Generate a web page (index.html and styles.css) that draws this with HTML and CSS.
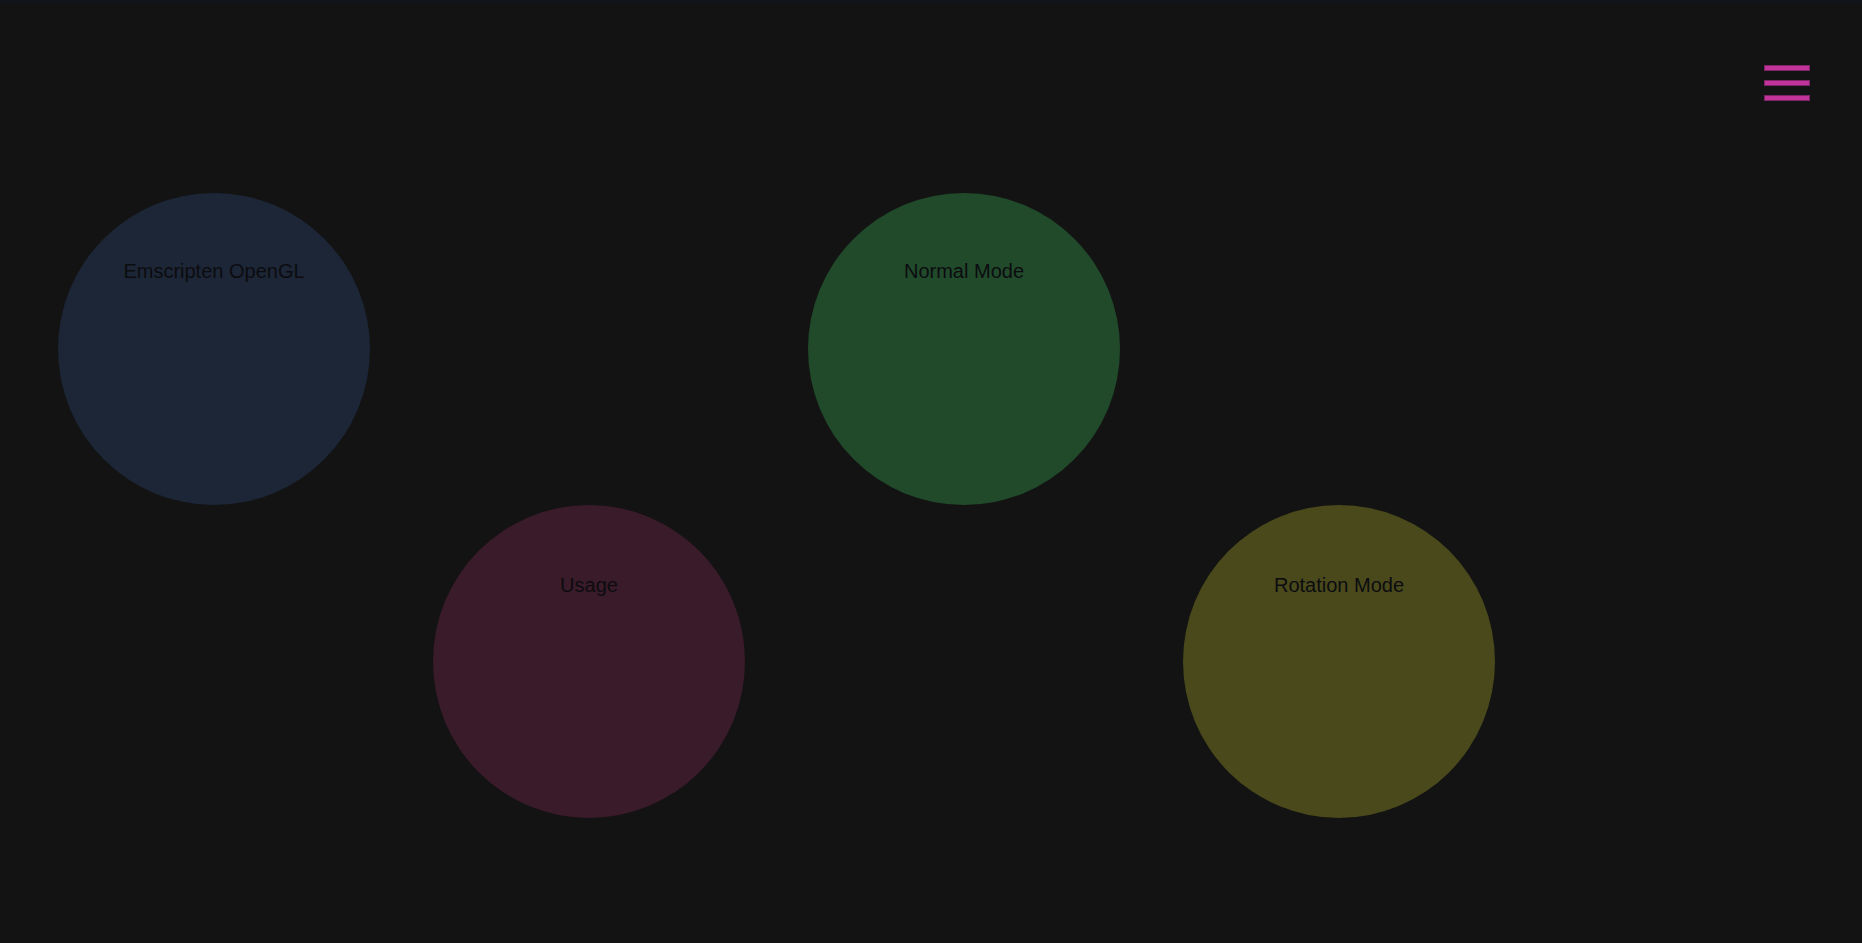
FILE: index.html
```html
<!DOCTYPE html>
<html lang="en">
<head>
<meta charset="utf-8">
<title>Emscripten OpenGL</title>
<link rel="stylesheet" href="styles.css">
</head>
<body>
<div class="topstrip"></div>
<header class="header">
  <button class="menu" aria-label="Menu">
    <span class="bar"></span>
    <span class="bar"></span>
    <span class="bar"></span>
  </button>
</header>
<main class="bubbles">
  <div class="bubble blue"><span class="label">Emscripten OpenGL</span></div>
  <div class="bubble red low"><span class="label">Usage</span></div>
  <div class="bubble green"><span class="label">Normal Mode</span></div>
  <div class="bubble olive low"><span class="label">Rotation Mode</span></div>
</main>
</body>
</html>
```
FILE: styles.css
```css
html, body {
  margin: 0;
  padding: 0;
  background: #131313;
  height: 100%;
  overflow: hidden;
}
body {
  font-family: "Liberation Sans", Arial, sans-serif;
}
.topstrip {
  height: 4px;
  background: #13131a;
}
.header {
  height: 189px;
  box-sizing: border-box;
  display: flex;
  justify-content: flex-end;
  align-items: flex-start;
  padding: 61px 52px 0 0;
}
.menu {
  display: flex;
  flex-direction: column;
  gap: 9px;
  padding: 0;
  margin: 0;
  border: 0;
  background: transparent;
  cursor: pointer;
}
.bar {
  display: block;
  width: 46px;
  height: 6px;
  box-sizing: border-box;
  background: #c1359a;
  border: 1px solid #7d2367;
}
.bubbles {
  display: flex;
  align-items: flex-start;
  gap: 63px;
  padding-left: 58px;
}
.bubble {
  flex: 0 0 312px;
  width: 312px;
  height: 312px;
  border-radius: 50%;
  box-sizing: border-box;
  padding-top: 67px;
  text-align: center;
}
.bubble.low {
  margin-top: 312px;
  height: 313px;
  padding-top: 69px;
}
.blue { background: #1c2636; }
.red { background: #3a1b29; }
.green { background: #214a2b; }
.olive { background: #49491b; }
.label {
  font-size: 20px;
  line-height: 23px;
  color: #0c0c10;
}
```
